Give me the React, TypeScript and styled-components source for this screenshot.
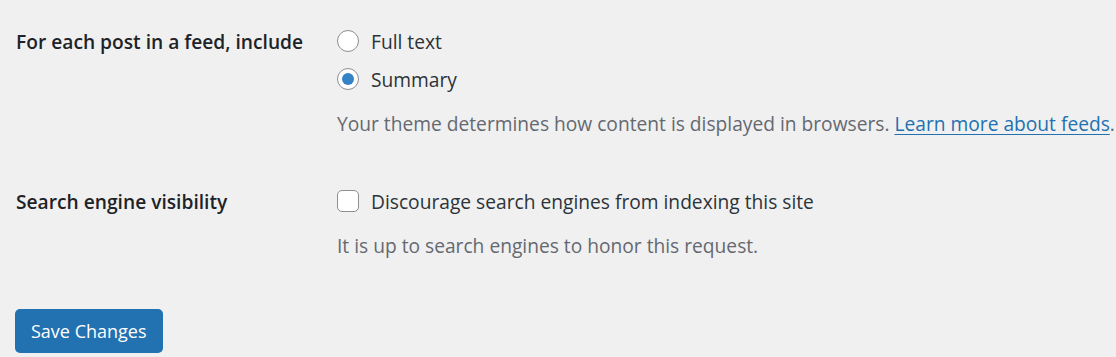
import React, { useState } from 'react';
import styled, { createGlobalStyle } from 'styled-components';

const GlobalStyle = createGlobalStyle`
  html, body {
    margin: 0;
    padding: 0;
    background: #f0f0f1;
  }
  body {
    font-family: 'Open Sans', 'Noto Sans', sans-serif;
    color: #1d2327;
  }
`;

const Page = styled.form`
  padding: 22px 0 0 16px;
  width: 1116px;
  height: 357px;
  box-sizing: border-box;
  overflow: hidden;
`;

const Row = styled.div<{ $gap?: number }>`
  display: grid;
  grid-template-columns: 321px 1fr;
  margin-bottom: ${(p) => p.$gap ?? 0}px;
`;

const Label = styled.div`
  font-size: 19.2px;
  font-weight: 600;
  line-height: 40px;
`;

const Field = styled.div`
  display: flex;
  flex-direction: column;
`;

const Option = styled.label`
  display: flex;
  align-items: center;
  gap: 12px;
  height: 38px;
  font-size: 19.2px;
  color: #2c3338;
  cursor: pointer;
`;

const Radio = styled.span<{ $checked: boolean }>`
  width: 22px;
  height: 22px;
  box-sizing: border-box;
  border: 1.5px solid #8c8f94;
  border-radius: 50%;
  background: #fff;
  display: flex;
  align-items: center;
  justify-content: center;
  flex-shrink: 0;

  &::after {
    content: '';
    display: ${(p) => (p.$checked ? 'block' : 'none')};
    width: 12px;
    height: 12px;
    border-radius: 50%;
    background: #3582c4;
  }
`;

const Checkbox = styled.span`
  width: 22px;
  height: 22px;
  box-sizing: border-box;
  border: 1.5px solid #8c8f94;
  border-radius: 5px;
  background: #fff;
  flex-shrink: 0;
`;

const Description = styled.p`
  margin: 6px 0 0;
  font-size: 19.2px;
  line-height: 40px;
  color: #646970;
  white-space: nowrap;
`;

const Link = styled.a`
  color: #2271b1;
  text-decoration: underline;
  text-underline-offset: 3px;
`;

const Submit = styled.button`
  margin-top: 43px;
  margin-left: -1px;
  background: #2271b1;
  color: #fff;
  border: none;
  border-radius: 5px;
  height: 44px;
  padding: 0 16px;
  font-family: inherit;
  font-size: 18px;
  cursor: pointer;
`;

export default function App() {
  const [mode, setMode] = useState<'full' | 'summary'>('summary');

  return (
    <>
      <GlobalStyle />
      <Page onSubmit={(e) => e.preventDefault()}>
        <Row $gap={38}>
          <Label>For each post in a feed, include</Label>
          <Field>
            <Option onClick={() => setMode('full')}>
              <Radio $checked={mode === 'full'} />
              Full text
            </Option>
            <Option onClick={() => setMode('summary')}>
              <Radio $checked={mode === 'summary'} />
              Summary
            </Option>
            <Description>
              Your theme determines how content is displayed in browsers.{' '}
              <Link href="#">Learn more about feeds</Link>.
            </Description>
          </Field>
        </Row>
        <Row>
          <Label>Search engine visibility</Label>
          <Field>
            <Option>
              <Checkbox />
              Discourage search engines from indexing this site
            </Option>
            <Description>It is up to search engines to honor this request.</Description>
          </Field>
        </Row>
        <Submit type="submit">Save Changes</Submit>
      </Page>
    </>
  );
}
